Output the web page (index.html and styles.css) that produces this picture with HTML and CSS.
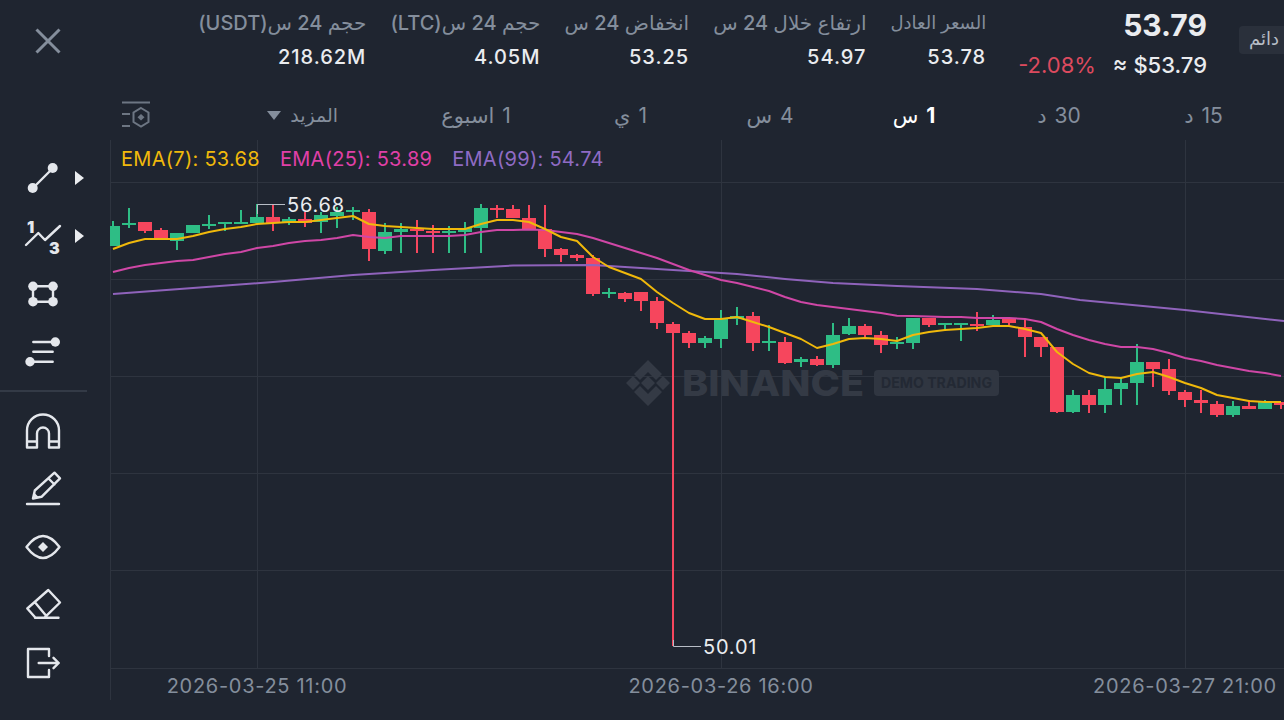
FILE: index.html
```html
<!DOCTYPE html>
<html lang="ar">
<head>
  <meta charset="UTF-8" />
  <meta name="viewport" content="width=device-width, initial-scale=1" />
  <title>LTCUSDT Chart</title>
  <link rel="stylesheet" href="styles.css">
</head>
<body>
  <header class="top" dir="rtl">
    <div class="tag">دائم</div>
    <div class="price">
      <div class="price-main">53.79</div>
      <div class="price-sub">
        <span dir="ltr">≈ $53.79</span>
        <span class="down" dir="ltr">-2.08%</span>
      </div>
    </div>
    <div class="stats">
      <div class="stat"><span class="stat-label">السعر العادل</span><span class="stat-value">53.78</span></div>
      <div class="stat"><span class="stat-label">ارتفاع خلال 24 س</span><span class="stat-value">54.97</span></div>
      <div class="stat"><span class="stat-label">انخفاض 24 س</span><span class="stat-value">53.25</span></div>
      <div class="stat"><span class="stat-label">حجم 24 س(LTC)</span><span class="stat-value">4.05M</span></div>
      <div class="stat"><span class="stat-label">حجم 24 س(USDT)</span><span class="stat-value">218.62M</span></div>
    </div>
    <button class="close" type="button" aria-label="close">
      <svg width="26" height="26" viewBox="0 0 26 26"><path d="M1.5 1.5 L24.5 24.5 M24.5 1.5 L1.5 24.5"/></svg>
    </button>
  </header>

  <nav class="tabs" dir="rtl">
    <span class="tab">15 د</span>
    <span class="tab">30 د</span>
    <span class="tab active"><b>1</b> س</span>
    <span class="tab">4 س</span>
    <span class="tab">1 ي</span>
    <span class="tab">1 اسبوع</span>
    <span class="tab more">المزيد<i class="caret"></i></span>
    <svg class="tab-icon" width="28" height="28" viewBox="0 0 28 28">
      <path d="M0 1.5 H28 M0 13 H8 M0 25 H8"/>
      <path d="M19 7 L26.5 11.5 V21 L19 25.5 L11.5 21 V11.5 Z"/>
      <path class="solid" d="M19 13 L22.5 16.3 L19 19.6 L15.5 16.3 Z"/>
    </svg>
  </nav>

  <main class="main">
    <aside class="tools">
      <div class="tool">
        <svg viewBox="0 0 40 40"><path d="M10 30 L30 10"/><circle class="solid" cx="29.7" cy="10" r="5"/><circle class="solid" cx="9.7" cy="30" r="5"/></svg>
        <i class="tool-arrow"></i>
      </div>
      <div class="tool">
        <svg viewBox="0 0 40 40"><path d="M3 29 L15.3 17 L22 24 L37 10"/><text x="4" y="16.5" class="fib">1</text><text x="26" y="37.5" class="fib">3</text></svg>
        <i class="tool-arrow"></i>
      </div>
      <div class="tool">
        <svg viewBox="0 0 40 40"><path d="M10 12.3 H30 V27.7 H10 Z"/><circle class="solid" cx="10" cy="12.3" r="4.8"/><circle class="solid" cx="30" cy="12.3" r="4.8"/><circle class="solid" cx="10" cy="27.7" r="4.8"/><circle class="solid" cx="30" cy="27.7" r="4.8"/></svg>
      </div>
      <div class="tool">
        <svg viewBox="0 0 40 40"><path d="M10.3 10 H32 M10.3 19.7 H29.7 M7 29.7 H29.7"/><circle class="solid" cx="32.3" cy="10" r="4.7"/><circle class="solid" cx="7" cy="29.7" r="4.7"/></svg>
      </div>
      <div class="tool-sep"></div>
      <div class="tool">
        <svg viewBox="0 0 40 40"><path d="M4 36.5 V19.5 A16 16 0 0 1 36 19.5 V36.5 H26 V22.5 A6 6 0 0 0 14 22.5 V36.5 Z M4 30.5 H14 M26 30.5 H36"/></svg>
      </div>
      <div class="tool">
        <svg viewBox="0 0 40 40"><path d="M10 29.5 L11.8 21.5 L31.5 3.7 L37 9.3 L18.5 27.8 Z M25.5 9.5 L31.5 15.5 M4 35 H36"/><path class="solid" d="M10 29.5 L11.4 23.8 L15.8 28.2 Z"/></svg>
      </div>
      <div class="tool">
        <svg viewBox="0 0 40 40"><path d="M3.5 20 C8 14 14 9 20 9 C26 9 32 14 36.5 20 C32 26 26 31 20 31 C14 31 8 26 3.5 20 Z"/><path class="solid" d="M20 15 L25 20 L20 25 L15 20 Z"/></svg>
      </div>
      <div class="tool">
        <svg viewBox="0 0 40 40"><path d="M25.3 5 L37 17.5 L21.5 32.7 H12.5 L4.3 23.5 Z M11.5 16.8 L22.5 30 M12 32.7 H35.5"/></svg>
      </div>
      <div class="tool">
        <svg viewBox="0 0 40 40"><path d="M26 13 V6 H5 V34 H26 V27 M15.7 20 H35.7 M30.5 14.8 L35.7 20 L30.5 25.2"/></svg>
      </div>
    </aside>

    <section class="chart">
      <div class="legend">
        <span class="ema7">EMA(7): 53.68</span>
        <span class="ema25">EMA(25): 53.89</span>
        <span class="ema99">EMA(99): 54.74</span>
      </div>
      <svg id="plot" class="plot" width="1174" height="560" viewBox="110 140 1174 560"></svg>
    </section>
  </main>

  <script src="script.js"></script>
</body>
</html>
```

FILE: styles.css
```css
html, body {
  margin: 0;
  height: 720px;
  overflow: hidden;
}
body {
  font-family: Inter, 'DejaVu Sans', sans-serif;
  background: #1f2530;
  color: #eaecef;
}
svg {
  display: block;
  overflow: visible;
}

/* header */
.top {
  display: flex;
  align-items: flex-start;
  gap: 32px;
  height: 90px;
  box-sizing: border-box;
  padding-top: 11px;
  margin-right: -5px;
}
.tag {
  width: 50px;
  height: 28px;
  margin-top: 15px;
  flex: none;
  box-sizing: border-box;
  padding-right: 10px;
  background: #2a303b;
  border-radius: 4px;
  color: #b7bdc6;
  font-size: 18px;
  line-height: 26px;
}
.price {
  display: flex;
  flex-direction: column;
  gap: 8px;
  margin-top: -3px;
}
.price-main {
  font-size: 30px;
  font-weight: 700;
  line-height: 34px;
}
.price-sub {
  display: flex;
  gap: 17px;
  font-size: 22px;
  font-weight: 500;
  line-height: 30px;
}
.down {
  color: #dc4a5e;
  font-weight: 400;
}
.stats {
  display: flex;
  gap: 24px;
}
.stat {
  display: flex;
  flex-direction: column;
  gap: 10px;
}
.stat-label {
  color: #848e9c;
  font-size: 20px;
  font-weight: 500;
  line-height: 24px;
  white-space: nowrap;
}
.stat:first-child .stat-label {
  font-size: 18px;
}
.stat-value {
  font-size: 20px;
  font-weight: 500;
  letter-spacing: 1px;
  line-height: 24px;
}
.close {
  margin-right: auto;
  margin-left: 35px;
  margin-top: 17px;
  padding: 0;
  border: none;
  background: none;
}
.close path {
  fill: none;
  stroke: #848e9c;
  stroke-width: 3;
}

/* timeframe tabs */
.tabs {
  display: grid;
  grid-template-columns: 41px 44px 42px 42px 33px 72px 72px 28px;
  align-items: center;
  gap: 102px;
  height: 50px;
  padding-right: 60px;
  color: #848e9c;
  font-size: 21px;
  word-spacing: 2px;
}
.tab {
  justify-self: center;
  white-space: nowrap;
}
.tab.active {
  color: #fff;
}
.tab.active b {
  font-weight: 700;
}
.more {
  display: flex;
  align-items: center;
  gap: 9px;
  justify-self: start;
  font-size: 19px;
}
.caret {
  width: 0;
  height: 0;
  border-left: 7.5px solid transparent;
  border-right: 7.5px solid transparent;
  border-top: 9px solid #848e9c;
}
.tab-icon {
  margin-right: 14px;
}
.tab-icon path {
  fill: none;
  stroke: #6d7683;
  stroke-width: 2;
}
.tab-icon .solid {
  fill: #6d7683;
  stroke: none;
}

/* left toolbar */
.main {
  display: flex;
  height: 560px;
}
.tools {
  width: 110px;
  flex: none;
  box-sizing: border-box;
  padding-top: 9px;
}
.tool {
  display: flex;
  align-items: center;
  height: 58px;
  padding-left: 23px;
  gap: 12px;
}
.tool svg {
  width: 40px;
  height: 40px;
}
.tool path {
  fill: none;
  stroke: #e4e7ec;
  stroke-width: 2.4;
  stroke-linejoin: round;
  stroke-linecap: round;
}
.tool .solid {
  fill: #e4e7ec;
  stroke: none;
}
.fib {
  fill: #e4e7ec;
  font-size: 16px;
  font-weight: 900;
}
.tool-arrow {
  width: 0;
  height: 0;
  border-top: 7px solid transparent;
  border-bottom: 7px solid transparent;
  border-left: 9px solid #eaecef;
}
.tool-sep {
  width: 87px;
  height: 2px;
  margin: 9px 0 10px;
  background: #333a46;
}

/* chart */
.chart {
  position: relative;
  flex: 1;
}
.legend {
  position: absolute;
  top: 7px;
  left: 11px;
  display: flex;
  gap: 20px;
  font-size: 20px;
  letter-spacing: 0.28px;
  line-height: 24px;
  white-space: nowrap;
}
.ema7 { color: #f0b90b; }
.ema25 { color: #e040a8; }
.ema99 { color: #8f6bc4; }
.plot {
  overflow: hidden;
}
.plot text {
  font-family: Inter, sans-serif;
}
.grid {
  stroke: #2e343f;
  stroke-width: 1;
}
.axis-label {
  fill: #848e9c;
  font-size: 20px;
  letter-spacing: 0.7px;
  text-anchor: middle;
}
.mark-line {
  fill: none;
  stroke: #b7bdc6;
  stroke-width: 1;
}
.mark-label {
  fill: #eaecef;
  font-size: 20px;
  letter-spacing: 0.8px;
}
.wm-logo {
  fill: #343a45;
}
.wm-name {
  fill: #343a45;
  font-size: 36px;
  font-weight: 800;
}
.wm-box {
  fill: #303641;
}
.wm-demo {
  fill: #232934;
  font-size: 15px;
  font-weight: 700;
}
.line {
  fill: none;
  stroke-width: 2;
  stroke-linejoin: round;
}
.line-99 { stroke: #8f63bb; }
.line-25 { stroke: #cf47a6; }
.line-7 { stroke: #f0b90b; }
.up { fill: #2ebd85; }
.dn { fill: #f6465d; }
```

FILE: script.js
```js
const NS = 'http://www.w3.org/2000/svg';
const plot = document.getElementById('plot');

// g/r, wick top, wick bottom, body top, body bottom (page pixels)
const candles = [
  ['g',221,246,226,246], ['g',208,228,223,225], ['r',222,233,222,231], ['r',228,240,230,240],
  ['g',233,250,233,241], ['g',225,233,225,233], ['g',215,229,224,225], ['g',222,231,222,224],
  ['g',210,223,222,224], ['g',204,223,217,223], ['r',204,231,217,223], ['g',217,225,219,223],
  ['r',212,227,219,223], ['g',212,233,215,222], ['g',207,228,212,216], ['g',207,220,210,212],
  ['r',209,261,212,249], ['g',223,254,232,251], ['g',223,253,229,232], ['r',220,253,229,231],
  ['r',225,253,231,233], ['g',226,253,231,233], ['g',222,253,228,232], ['g',204,253,208,228],
  ['r',205,218,208,209], ['r',205,218,209,218], ['r',205,229,218,229], ['r',205,257,229,249],
  ['r',248,262,249,255], ['r',254,261,255,258], ['r',255,296,258,294], ['g',288,298,292,293],
  ['r',292,302,293,299], ['r',292,311,292,301], ['r',297,329,301,323], ['r',322,646,324,333],
  ['r',331,348,333,343], ['g',336,348,338,343], ['g',310,348,318,339], ['g',307,325,316,319],
  ['r',312,351,316,343], ['g',325,351,341,342], ['r',337,364,342,363], ['g',357,367,359,362],
  ['r',356,366,359,365], ['g',323,368,335,365], ['g',318,335,326,334], ['r',324,339,326,335],
  ['r',331,353,335,345], ['g',337,349,342,343], ['g',318,349,318,343], ['r',318,327,318,325],
  ['g',323,331,323,324], ['g',323,341,323,324], ['r',312,331,324,326], ['g',315,325,320,325],
  ['r',318,325,319,323], ['r',319,357,327,337], ['r',337,357,337,347], ['r',347,413,347,412],
  ['g',390,413,395,412], ['r',390,413,395,405], ['g',378,413,389,405], ['g',378,405,383,389],
  ['g',344,405,362,383], ['r',362,387,362,369], ['r',359,395,369,391], ['r',390,407,392,400],
  ['r',390,413,400,403], ['r',401,417,404,415], ['g',401,417,406,415], ['r',400,409,406,409],
  ['g',400,409,402,409], ['r',402,409,402,405]
];

const ema7 = [249,243,239,239,239,236,232,229,227,224,223,222,222,220,218,216,224,226,227,228,229,229,229,224,220,220,222,229,237,241,257,267,273,279,292,303,313,319,319,317,322,327,333,339,348,344,339,338,339,341,335,332,330,329,328,326,326,329,333,352,364,373,377,378,374,372,377,383,388,395,398,401,402,402];
const ema25 = [272,268,265,263,261,260,257,254,252,248,246,243,241,240,238,235,237,238,236,236,236,236,235,232,230,230,229.5,230,232,234,238,243,248,253,258,264,270,275,280,283,287,291,297,302,305,307,309,311,313,315.7,316,316.5,317,317,318,318,318,319,322,329,335,340,344,347,347,349,353,358,361,365,368,371,373,376];
const ema99 = [[113,294],[193,288],[273,282],[353,275],[433,270],[513,265.5],[593,265],[641,268],[689,271],[737,274],[785,279],[833,283],[897,286],[977,289],[1041,294],[1080,300],[1185,310],[1284,321]];

function add(tag, attrs, text) {
  const el = document.createElementNS(NS, tag);
  Object.keys(attrs).forEach(k => el.setAttribute(k, attrs[k]));
  if (text) el.textContent = text;
  plot.appendChild(el);
  return el;
}

function candleX(i) {
  return 113 + 16 * i;
}

function drawGrid() {
  [182, 279, 376, 473, 570, 668].forEach(y => {
    add('line', { class: 'grid', x1: 110, x2: 1284, y1: y + 0.5, y2: y + 0.5 });
  });
  [257, 721, 1185].forEach(x => {
    add('line', { class: 'grid', x1: x + 0.5, x2: x + 0.5, y1: 140, y2: 668 });
  });
  add('line', { class: 'grid', x1: 110.5, x2: 110.5, y1: 140, y2: 700 });
}

function drawWatermark() {
  add('path', { class: 'wm-logo', d: 'M648 360 L662 374 L656 380 L648 372 L640 380 L634 374 Z M648 406 L662 392 L656 386 L648 394 L640 386 L634 392 Z M633 376 L640 383 L633 390 L626 383 Z M663 376 L670 383 L663 390 L656 383 Z M648 376 L655 383 L648 390 L641 383 Z' });
  add('text', { class: 'wm-name', x: 682, y: 396, textLength: 182, lengthAdjust: 'spacingAndGlyphs' }, 'BINANCE');
  add('rect', { class: 'wm-box', x: 874, y: 370, width: 125, height: 26, rx: 4 });
  add('text', { class: 'wm-demo', x: 881, y: 388, textLength: 111, lengthAdjust: 'spacingAndGlyphs' }, 'DEMO TRADING');
}

function drawCandles() {
  candles.forEach((c, i) => {
    const x = candleX(i);
    const cls = c[0] === 'g' ? 'up' : 'dn';
    add('rect', { class: cls, x: x - 1, y: c[1], width: 2, height: c[2] - c[1] });
    add('rect', { class: cls, x: x - 7, y: c[3], width: 14, height: Math.max(c[4] - c[3], 2) });
  });
}

function drawLine(points, cls) {
  add('polyline', { class: 'line ' + cls, points: points.map(p => p.join(',')).join(' ') });
}

function drawMarks() {
  add('path', { class: 'mark-line', d: 'M257.5 214 V204.5 H285' });
  add('text', { class: 'mark-label', x: 287, y: 212 }, '56.68');
  add('path', { class: 'mark-line', d: 'M673.5 640 V646.5 H701' });
  add('text', { class: 'mark-label', x: 703, y: 654 }, '50.01');
}

function drawAxis() {
  [[257, '2026-03-25 11:00'], [721, '2026-03-26 16:00'], [1185, '2026-03-27 21:00']].forEach(t => {
    add('text', { class: 'axis-label', x: t[0], y: 693 }, t[1]);
  });
}

drawGrid();
drawWatermark();
drawCandles();
drawLine(ema99, 'line-99');
drawLine(ema25.map((y, i) => [candleX(i), y]), 'line-25');
drawLine(ema7.map((y, i) => [candleX(i), y]), 'line-7');
drawMarks();
drawAxis();
```
